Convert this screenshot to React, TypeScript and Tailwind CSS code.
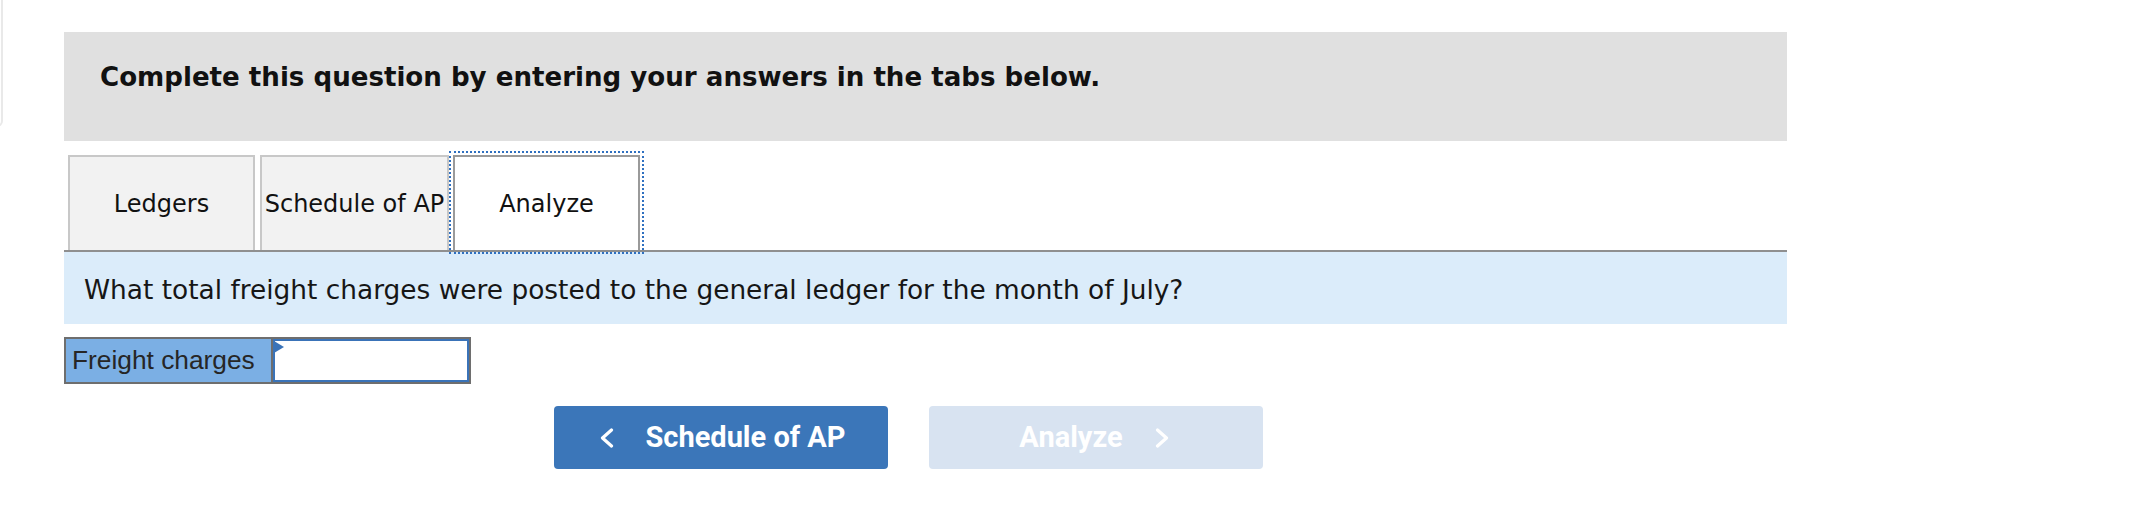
import React from "react";

function ChevronLeft() {
  return (
    <svg width="14" height="20" viewBox="0 0 14 20" fill="none">
      <polyline points="11.5,2 2.5,10 11.5,18" stroke="white" strokeWidth="3.2" strokeLinecap="round" strokeLinejoin="round" />
    </svg>
  );
}

function ChevronRight() {
  return (
    <svg width="14" height="20" viewBox="0 0 14 20" fill="none">
      <polyline points="2.5,2 11.5,10 2.5,18" stroke="white" strokeWidth="3.2" strokeLinecap="round" strokeLinejoin="round" />
    </svg>
  );
}

export default function App() {
  return (
    <div className="relative w-[2154px] h-[513px] bg-white overflow-hidden">
      <div className="absolute left-[-20px] top-[-10px] w-[23px] h-[137px] border-2 border-[#e9e9e9] rounded-[6px]" />
      <div className="pt-[32px] pl-[64px] w-[1787px]">
        <div className="h-[109px] bg-[#e0e0e0] pl-[36px] pt-[30px]">
          <p className="font-['DejaVu_Sans',Verdana,sans-serif] font-bold text-[26.1px] leading-[30px] text-[#111]">
            Complete this question by entering your answers in the tabs below.
          </p>
        </div>

        <div className="mt-[14px] flex items-end border-b-2 border-[#8f8f8f] pl-[4px] font-['DejaVu_Sans',Verdana,sans-serif] text-[24px] text-[#111]">
          <div className="w-[187px] h-[95px] border-2 border-b-0 border-[#c8c8c8] bg-[#f2f2f2] flex items-center justify-center whitespace-nowrap">
            Ledgers
          </div>
          <div className="ml-[5px] w-[189px] h-[95px] border-2 border-b-0 border-[#c8c8c8] bg-[#f2f2f2] flex items-center justify-center whitespace-nowrap">
            Schedule of AP
          </div>
          <div className="relative z-10 ml-[4px] w-[187px] h-[95px] border-2 border-b-0 border-[#9a9a9a] bg-white flex items-center justify-center whitespace-nowrap outline-[2.5px] outline-dotted outline-offset-[2px] outline-[#2f70c0]">
            Analyze
          </div>
        </div>

        <div className="h-[72px] bg-[#dbecfa] flex items-center pl-[20px] pt-[4px] font-['DejaVu_Sans',Verdana,sans-serif] text-[26.4px] text-[#161616] whitespace-nowrap">
          What total freight charges were posted to the general ledger for the month of July?
        </div>

        <div className="mt-[13px] flex w-[407px] h-[47px] border-2 border-[#6e6e6e]">
          <div className="w-[207px] bg-[#7bafe4] border-r-2 border-[#6e6e6e] flex items-center pl-[6px] font-['Liberation_Sans',Arial,sans-serif] text-[26.3px] text-[#262626] whitespace-nowrap">
            Freight charges
          </div>
          <div className="relative flex-1 border-2 border-[#3a73b8] bg-white">
            <svg className="absolute left-[-1px] top-0" width="10" height="12" viewBox="0 0 10 12">
              <polygon points="0,0 10,6 0,12" fill="#3a73b8" />
            </svg>
          </div>
        </div>

        <div className="mt-[22px] ml-[490px] flex gap-[41px] font-['Roboto',sans-serif] font-bold text-[29px] text-white">
          <div className="w-[334px] h-[63px] rounded-[4px] bg-[#3b76b9] flex items-center justify-center gap-[31px]">
            <span className="ml-[4px]"><ChevronLeft /></span>
            <span>Schedule of AP</span>
          </div>
          <div className="w-[334px] h-[63px] rounded-[4px] bg-[#d8e3f1] flex items-center justify-center gap-[32px]">
            <span>Analyze</span>
            <span className="mr-[4px]"><ChevronRight /></span>
          </div>
        </div>
      </div>
    </div>
  );
}
